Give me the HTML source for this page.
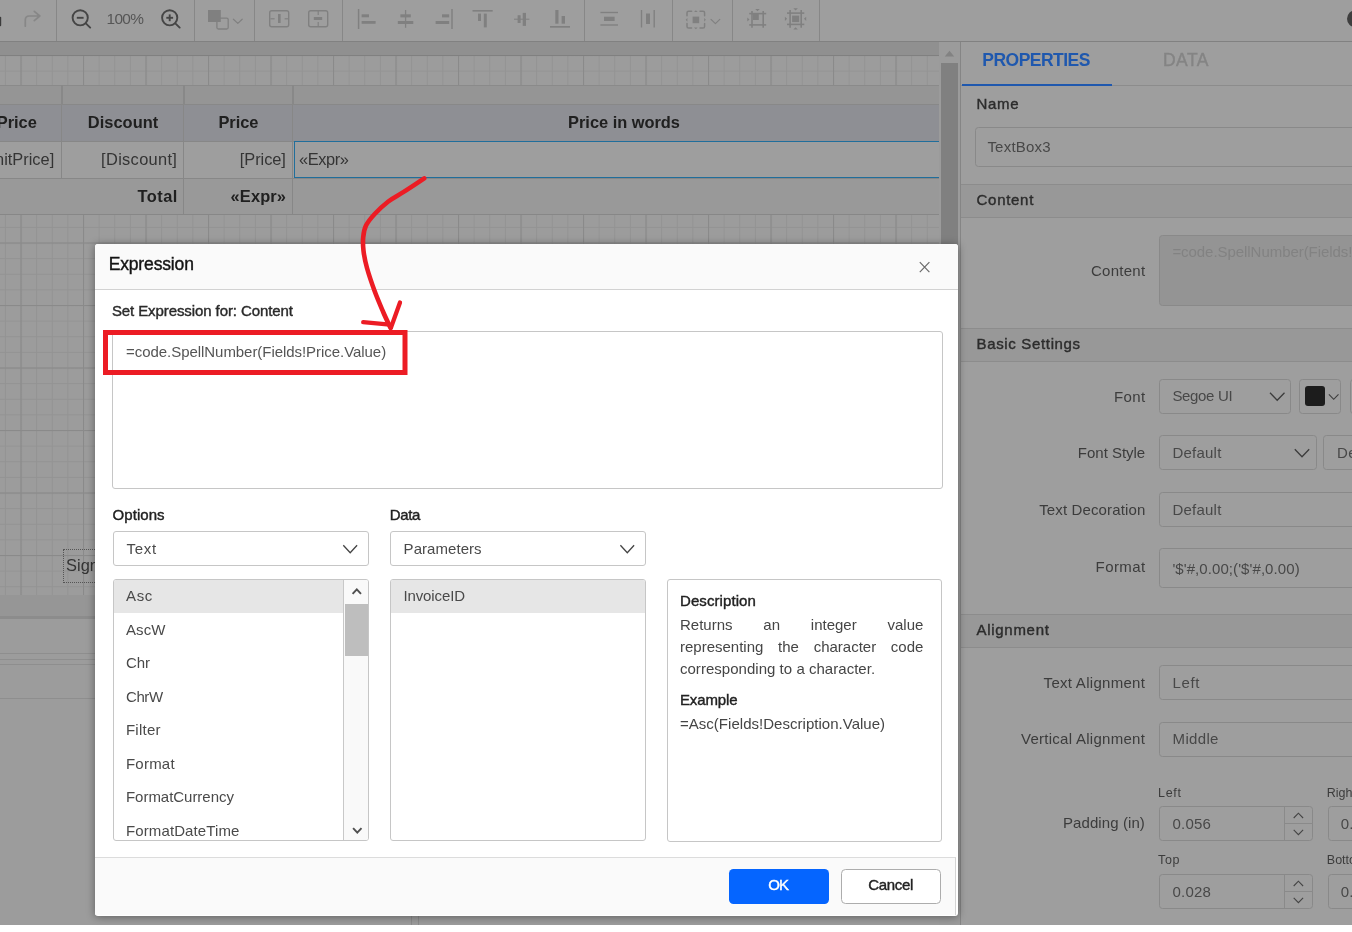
<!DOCTYPE html>
<html lang="en">
<head>
<meta charset="utf-8">
<title>Expression</title>
<style>
html,body{margin:0;padding:0;background:#fff;}
body{width:1352px;height:932px;overflow:hidden;position:relative;font-family:"Liberation Sans",sans-serif;}
#app{will-change:transform;position:absolute;left:0;top:0;width:1352px;height:925px;background:#9c9c9c;overflow:hidden;}
.a{position:absolute;box-sizing:border-box;}
.t{position:absolute;white-space:pre;line-height:1;}
svg{position:absolute;overflow:visible;}
/* toolbar */
#toolbar{position:absolute;left:0;top:0;width:1352px;height:42px;background:#9e9e9e;border-bottom:1px solid #818181;box-sizing:border-box;}
.sep{position:absolute;top:0;width:1px;height:41px;background:#878787;}
/* design */
#design{position:absolute;left:0;top:0;width:1352px;height:925px;background:#909090;overflow:hidden;}
.grid{position:absolute;left:0;width:939px;background-color:#9c9c9c;
 background-image:
  linear-gradient(to right,#8a8a8a 0,#8a8a8a 1.4px,transparent 1.5px),
  linear-gradient(to bottom,#8a8a8a 0,#8a8a8a 1.4px,transparent 1.5px),
  linear-gradient(to right,#939393 0,#939393 1px,transparent 1px),
  linear-gradient(to bottom,#939393 0,#939393 1px,transparent 1px);
 background-size:62.5px 62.5px,62.5px 62.5px,15.625px 15.625px,15.625px 15.625px;}
.cell{position:absolute;box-sizing:border-box;border-right:1px solid #878787;border-bottom:1px solid #878787;}
/* props */
#props{position:absolute;left:960px;top:42px;width:392px;height:883px;background:#9e9e9e;border-left:1px solid #858585;box-sizing:border-box;overflow:hidden;}
.sech{position:absolute;left:961px;width:391px;background:#989898;border-top:1px solid #8c8c8c;border-bottom:1px solid #8c8c8c;box-sizing:border-box;}
.inp{position:absolute;box-sizing:border-box;border:1px solid #898989;border-radius:3.5px;background:#9e9e9e;}
/* dialog */
#dialog{position:absolute;left:95px;top:244px;width:863px;height:672px;background:#fff;box-shadow:0 1px 8px 0 rgba(0,0,0,.40);border-radius:3px;overflow:hidden;}
.dbox{position:absolute;box-sizing:border-box;border:1px solid #c6c6c6;border-radius:3px;background:#fff;}
</style>
</head>
<body>
<div id="app">
<div id="design">
<div class="grid" style="top:55px;height:30px;background-position:20.5px 0px,20.5px 0px,20.5px 0px,20.5px 0px;"></div>
<div class="a" style="left:0;top:55px;width:939px;height:1px;background:#808080;"></div>
<div class="a" style="left:0;top:85px;width:939px;height:19px;background:#959595;border-top:1px solid #8a8a8a;"></div>
<div class="a" style="left:61px;top:85px;width:1.5px;height:19px;background:#888;"></div>
<div class="a" style="left:183px;top:85px;width:1.5px;height:19px;background:#888;"></div>
<div class="a" style="left:292px;top:85px;width:1.5px;height:19px;background:#888;"></div>
<div class="cell" style="left:-60px;top:104px;width:122px;height:38px;background:#8e8f94;"></div>
<div class="cell" style="left:62px;top:104px;width:121.5px;height:38px;background:#8e8f94;"></div>
<div class="cell" style="left:183.5px;top:104px;width:109.5px;height:38px;background:#8e8f94;"></div>
<div class="cell" style="left:293px;top:104px;width:662px;height:38px;background:#8e8f94;"></div>
<div class="cell" style="left:-60px;top:142px;width:122px;height:37px;background:#9e9e9e;"></div>
<div class="cell" style="left:62px;top:142px;width:121.5px;height:37px;background:#9e9e9e;"></div>
<div class="cell" style="left:183.5px;top:142px;width:109.5px;height:37px;background:#9e9e9e;"></div>
<div class="cell" style="left:293px;top:142px;width:662px;height:37px;background:#9e9e9e;"></div>
<div class="cell" style="left:-60px;top:179px;width:243.5px;height:36px;background:#999999;"></div>
<div class="cell" style="left:183.5px;top:179px;width:109.5px;height:36px;background:#999999;"></div>
<div class="cell" style="left:293px;top:179px;width:662px;height:36px;background:#999999;"></div>
<div class="a" style="left:0;top:104px;width:939px;height:1px;background:#888;"></div>
<div class="a" style="left:293.5px;top:141px;width:661px;height:37px;border:1px solid #206e9b;"></div>
<div class="grid" style="top:215px;height:379.5px;background-position:20.5px -160px,20.5px -160px,20.5px -160px,20.5px -160px;"></div>
<div class="a" style="left:63px;top:549px;width:120px;height:34px;border:1px dotted #555;"></div>
<div class="a" style="left:0;top:594.5px;width:939px;height:22px;background:#969696;"></div>
<div class="a" style="left:0;top:616px;width:939px;height:3px;background:#8c8c8c;"></div>
<div class="a" style="left:0;top:619px;width:939px;height:306px;background:#9c9c9c;"></div>
<div class="a" style="left:0;top:653px;width:939px;height:1px;background:#8e8e8e;"></div>
<div class="a" style="left:0;top:659px;width:939px;height:1px;background:#8e8e8e;"></div>
<div class="a" style="left:0;top:664px;width:939px;height:1px;background:#8e8e8e;"></div>
<div class="a" style="left:0;top:698px;width:939px;height:1px;background:#8e8e8e;"></div>
<div class="a" style="left:411px;top:700px;width:1px;height:225px;background:#8c8c8c;"></div>
<div class="a" style="left:418px;top:700px;width:1px;height:225px;background:#8c8c8c;"></div>
<div class="t" style="top:114.00px;font-size:16.4px;color:#202020;font-weight:bold;right:1315.15px;">Unit Price</div>
<div class="t" style="top:114.00px;font-size:16.4px;color:#202020;font-weight:bold;letter-spacing:0.040px;left:87.80px;">Discount</div>
<div class="t" style="top:114.00px;font-size:16.4px;color:#202020;font-weight:bold;letter-spacing:-0.076px;left:218.50px;">Price</div>
<div class="t" style="top:114.00px;font-size:16.4px;color:#202020;font-weight:bold;letter-spacing:-0.019px;left:568.10px;">Price in words</div>
<div class="t" style="top:151.00px;font-size:16.4px;color:#343434;right:1297.75px;">[UnitPrice]</div>
<div class="t" style="top:151.00px;font-size:16.4px;color:#343434;letter-spacing:0.324px;left:101.10px;">[Discount]</div>
<div class="t" style="top:151.00px;font-size:16.4px;color:#343434;letter-spacing:-0.058px;left:239.80px;">[Price]</div>
<div class="t" style="top:151.00px;font-size:16.4px;color:#343434;letter-spacing:-0.427px;left:299.10px;">«Expr»</div>
<div class="t" style="top:188.00px;font-size:16.4px;color:#202020;font-weight:bold;letter-spacing:0.467px;left:137.50px;">Total</div>
<div class="t" style="top:188.00px;font-size:16.4px;color:#202020;font-weight:bold;letter-spacing:0.126px;left:230.60px;">«Expr»</div>
<div class="t" style="top:557.00px;font-size:16.4px;color:#343434;left:66.10px;">Signature</div>
</div>
<div id="toolbar">
<div class="sep" style="left:56px"></div>
<div class="sep" style="left:194px"></div>
<div class="sep" style="left:254px"></div>
<div class="sep" style="left:342px"></div>
<div class="sep" style="left:584px"></div>
<div class="sep" style="left:672px"></div>
<div class="sep" style="left:732px"></div>
<div class="sep" style="left:819px"></div>
<svg width="1352" height="41" style="left:0;top:0"><rect x="-2.00" y="16.80" width="3.20" height="9.40" fill="#3c3c3c" rx="1"/><path d="M25.3 26.2 V20 Q25.3 16 29.3 16 H39.4 M34.3 11.3 L39.8 16 L34.3 20.7" stroke="#878787" stroke-width="1.70" fill="none" stroke-linecap="round" stroke-linejoin="round" /><circle cx="80.2" cy="17.8" r="7.6" fill="none" stroke="#454545" stroke-width="1.9"/><line x1="85.80" y1="23.40" x2="90.20" y2="27.60" stroke="#454545" stroke-width="1.90" stroke-linecap="round"/><line x1="76.80" y1="17.80" x2="83.60" y2="17.80" stroke="#454545" stroke-width="1.90" stroke-linecap="butt"/><circle cx="169.7" cy="17.8" r="7.6" fill="none" stroke="#454545" stroke-width="1.9"/><line x1="175.30" y1="23.40" x2="179.70" y2="27.60" stroke="#454545" stroke-width="1.90" stroke-linecap="round"/><line x1="166.30" y1="17.80" x2="173.10" y2="17.80" stroke="#454545" stroke-width="1.90" stroke-linecap="butt"/><line x1="169.70" y1="14.40" x2="169.70" y2="21.20" stroke="#454545" stroke-width="1.90" stroke-linecap="butt"/><rect x="216.9" y="18.1" width="11.3" height="10.9" rx="1.5" fill="none" stroke="#808080" stroke-width="1.3"/><rect x="208.00" y="10.00" width="12.80" height="12.00" fill="#808080" /><path d="M233.4 19.2 L237.8 23.4 L242.2 19.2" stroke="#808080" stroke-width="1.20" fill="none" stroke-linecap="round" stroke-linejoin="round" /><rect x="269.7" y="10.7" width="19" height="16" rx="2" fill="none" stroke="#808080" stroke-width="1.4"/><rect x="278.00" y="14.00" width="2.60" height="9.00" fill="#808080" /><line x1="270.50" y1="18.80" x2="274.60" y2="18.80" stroke="#808080" stroke-width="1.20" stroke-linecap="butt"/><line x1="284.60" y1="18.80" x2="288.80" y2="18.80" stroke="#808080" stroke-width="1.20" stroke-linecap="butt"/><rect x="308.7" y="10.7" width="19" height="16" rx="2" fill="none" stroke="#808080" stroke-width="1.4"/><rect x="313.80" y="17.00" width="8.40" height="3.00" fill="#808080" /><line x1="318.20" y1="11.00" x2="318.20" y2="15.00" stroke="#808080" stroke-width="1.20" stroke-linecap="butt"/><line x1="318.20" y1="22.00" x2="318.20" y2="26.50" stroke="#808080" stroke-width="1.20" stroke-linecap="butt"/><line x1="358.60" y1="9.00" x2="358.60" y2="29.00" stroke="#808080" stroke-width="1.50" stroke-linecap="butt"/><rect x="361.60" y="14.30" width="7.40" height="3.00" fill="#808080" /><rect x="361.60" y="21.00" width="14.00" height="2.80" fill="#808080" /><line x1="405.60" y1="10.00" x2="405.60" y2="27.80" stroke="#808080" stroke-width="1.30" stroke-linecap="butt"/><rect x="400.40" y="14.30" width="10.40" height="3.10" fill="#808080" /><rect x="397.80" y="21.00" width="15.50" height="3.00" fill="#808080" /><line x1="452.00" y1="9.00" x2="452.00" y2="29.00" stroke="#808080" stroke-width="1.50" stroke-linecap="butt"/><rect x="442.00" y="14.30" width="7.20" height="3.10" fill="#808080" /><rect x="435.60" y="21.00" width="13.60" height="3.00" fill="#808080" /><rect x="472.50" y="10.00" width="20.20" height="1.60" fill="#808080" /><rect x="478.00" y="13.60" width="3.00" height="7.40" fill="#808080" /><rect x="483.80" y="13.60" width="3.00" height="13.80" fill="#808080" /><line x1="514.00" y1="19.20" x2="529.40" y2="19.20" stroke="#808080" stroke-width="1.10" stroke-linecap="butt"/><rect x="517.60" y="15.20" width="3.00" height="7.80" fill="#808080" /><rect x="522.70" y="12.90" width="3.30" height="13.00" fill="#808080" /><rect x="550.00" y="26.00" width="20.00" height="1.70" fill="#808080" /><rect x="555.30" y="10.00" width="3.20" height="13.70" fill="#808080" /><rect x="561.60" y="16.00" width="3.40" height="7.70" fill="#808080" /><line x1="600.40" y1="12.50" x2="618.00" y2="12.50" stroke="#808080" stroke-width="1.40" stroke-linecap="butt"/><line x1="600.40" y1="25.00" x2="618.00" y2="25.00" stroke="#808080" stroke-width="1.40" stroke-linecap="butt"/><rect x="604.00" y="16.70" width="10.60" height="4.30" fill="#808080" /><line x1="641.50" y1="10.00" x2="641.50" y2="27.50" stroke="#808080" stroke-width="1.40" stroke-linecap="butt"/><line x1="654.20" y1="10.00" x2="654.20" y2="27.50" stroke="#808080" stroke-width="1.40" stroke-linecap="butt"/><rect x="646.00" y="13.50" width="4.00" height="10.50" fill="#808080" /><path d="M687.00 15.80 V12.80 Q687.00 11.20 688.60 11.20 H691.60" stroke="#808080" stroke-width="1.50" fill="none" stroke-linecap="round" stroke-linejoin="round" /><path d="M704.60 15.80 V12.80 Q704.60 11.20 703.00 11.20 H700.00" stroke="#808080" stroke-width="1.50" fill="none" stroke-linecap="round" stroke-linejoin="round" /><path d="M687.00 23.50 V26.50 Q687.00 28.10 688.60 28.10 H691.60" stroke="#808080" stroke-width="1.50" fill="none" stroke-linecap="round" stroke-linejoin="round" /><path d="M704.60 23.50 V26.50 Q704.60 28.10 703.00 28.10 H700.00" stroke="#808080" stroke-width="1.50" fill="none" stroke-linecap="round" stroke-linejoin="round" /><rect x="692.60" y="16.60" width="6.60" height="6.60" fill="#808080" /><path d="M694 11.9 l1.85 -1.7 l1.85 1.7z M694 27.5 l1.85 1.7 l1.85 -1.7z M687.4 18 l-1.7 1.85 l1.7 1.85z M704.2 18 l1.7 1.85 l-1.7 1.85z" fill="#808080"/><path d="M711 19.4 L715.4 23.6 L719.8 19.4" stroke="#808080" stroke-width="1.20" fill="none" stroke-linecap="round" stroke-linejoin="round" /><line x1="752.00" y1="11.00" x2="752.00" y2="27.80" stroke="#808080" stroke-width="1.60" stroke-linecap="butt"/><line x1="763.20" y1="11.00" x2="763.20" y2="27.80" stroke="#808080" stroke-width="1.60" stroke-linecap="butt"/><line x1="749.20" y1="13.60" x2="766.20" y2="13.60" stroke="#808080" stroke-width="1.60" stroke-linecap="butt"/><line x1="749.20" y1="24.90" x2="766.20" y2="24.90" stroke="#808080" stroke-width="1.60" stroke-linecap="butt"/><rect x="752.80" y="14.00" width="6.00" height="6.00" fill="#808080" /><path d="M755.2 9 h4.6 l-2.3 2.3z M747.3 17.4 l2.2 2.1 l-2.2 2.1z" fill="#808080"/><line x1="790.10" y1="10.00" x2="790.10" y2="27.80" stroke="#808080" stroke-width="1.60" stroke-linecap="butt"/><line x1="801.20" y1="10.00" x2="801.20" y2="27.80" stroke="#808080" stroke-width="1.60" stroke-linecap="butt"/><line x1="787.00" y1="13.10" x2="804.30" y2="13.10" stroke="#808080" stroke-width="1.60" stroke-linecap="butt"/><line x1="787.00" y1="24.40" x2="804.30" y2="24.40" stroke="#808080" stroke-width="1.60" stroke-linecap="butt"/><rect x="792.10" y="15.60" width="7.10" height="6.50" fill="#808080" /><path d="M793.3 8.3 h4.6 l-2.3 2.2z M793.3 29.4 h4.6 l-2.3 -2.2z M784.9 16.7 l2.2 2.1 l-2.2 2.1z M806.2 16.7 l-2.2 2.1 l2.2 2.1z" fill="#808080"/><circle cx="1355.4" cy="18.7" r="8.4" fill="#3e3e3e"/></svg>
<div class="t" style="top:11.00px;font-size:15.4px;color:#565656;letter-spacing:-0.700px;left:106.55px;">100%</div>
</div>
<div class="a" style="left:939px;top:42px;width:21px;height:883px;background:#9b9b9b;"></div>
<div class="a" style="left:941px;top:63px;width:17px;height:560px;background:#808080;"></div>
<svg width="21" height="20" style="left:939px;top:42px"><path d="M5.8 14.4 L10.5 8.8 L15.2 14.4z" fill="#828282"/></svg>
<div id="props"></div>
<div class="a" style="left:961px;top:85px;width:391px;height:1px;background:#8c8c8c;"></div>
<div class="a" style="left:962px;top:83.6px;width:149.6px;height:2.6px;background:#1f58ae;"></div>
<div class="t" style="top:52.00px;font-size:17.5px;color:#1f58ae;font-weight:bold;letter-spacing:-0.532px;left:982.34px;">PROPERTIES</div>
<div class="t" style="top:52.00px;font-size:17.5px;color:#848484;-webkit-text-stroke:0.4px #848484;letter-spacing:0.449px;left:1163.04px;">DATA</div>
<div class="t" style="top:96.00px;font-size:15px;color:#2c2c2c;-webkit-text-stroke:0.4px #2c2c2c;letter-spacing:0.700px;left:976.47px;">Name</div>
<div class="inp" style="left:974.5px;top:127px;width:400px;height:40px;"></div>
<div class="t" style="top:139.00px;font-size:15px;color:#484848;letter-spacing:0.221px;left:987.38px;">TextBox3</div>
<div class="sech" style="top:184px;height:34px;"></div>
<div class="t" style="top:192.00px;font-size:15px;color:#2c2c2c;-webkit-text-stroke:0.4px #2c2c2c;letter-spacing:0.700px;left:976.57px;">Content</div>
<div class="sech" style="top:328px;height:34px;"></div>
<div class="t" style="top:336.00px;font-size:15px;color:#2c2c2c;-webkit-text-stroke:0.4px #2c2c2c;letter-spacing:0.654px;left:976.57px;">Basic Settings</div>
<div class="sech" style="top:614px;height:34px;"></div>
<div class="t" style="top:622.00px;font-size:15px;color:#2c2c2c;-webkit-text-stroke:0.4px #2c2c2c;letter-spacing:0.700px;left:976.57px;">Alignment</div>
<div class="t" style="top:263.00px;font-size:15px;color:#3c3c3c;letter-spacing:0.267px;right:206.61px;">Content</div>
<div class="inp" style="left:1159px;top:235px;width:220px;height:71px;background:#949494;"></div>
<div class="t" style="top:244.00px;font-size:15px;color:#828282;letter-spacing:-0.052px;left:1172.38px;">=code.SpellNumber(Fields!Price.Value)</div>
<div class="t" style="top:389.00px;font-size:15px;color:#3c3c3c;letter-spacing:0.445px;right:206.33px;">Font</div>
<div class="inp" style="left:1159px;top:379px;width:132px;height:35px;"></div>
<div class="t" style="top:388.00px;font-size:15px;color:#484848;letter-spacing:-0.328px;left:1172.38px;">Segoe UI</div>
<svg width="1352" height="925" style="left:0;top:0"><path d="M1270.0 392.8 L1277.2 400.2 L1284.5 392.8" fill="none" stroke="#3c3c3c" stroke-width="1.3"/></svg>
<div class="inp" style="left:1298.8px;top:379px;width:42.7px;height:35px;"></div>
<div class="a" style="left:1305px;top:386px;width:20px;height:19.5px;background:#1c1c1c;border-radius:3px;"></div>
<svg width="1352" height="925" style="left:0;top:0"><path d="M1328.9 394.3 L1333.7 399.3 L1338.5 394.3" fill="none" stroke="#3c3c3c" stroke-width="1.1"/></svg>
<div class="inp" style="left:1349.5px;top:379px;width:42.7px;height:35px;"></div>
<div class="t" style="top:445.00px;font-size:15px;color:#3c3c3c;letter-spacing:-0.020px;right:206.80px;">Font Style</div>
<div class="inp" style="left:1159px;top:435px;width:158.3px;height:35px;"></div>
<div class="t" style="top:445.00px;font-size:15px;color:#484848;letter-spacing:0.236px;left:1172.38px;">Default</div>
<svg width="1352" height="925" style="left:0;top:0"><path d="M1294.8 449.2 L1302.0 456.8 L1309.2 449.2" fill="none" stroke="#3c3c3c" stroke-width="1.3"/></svg>
<div class="inp" style="left:1322.6px;top:435px;width:157.3px;height:35px;"></div>
<div class="t" style="top:445.00px;font-size:15px;color:#484848;letter-spacing:0.236px;left:1337.08px;">Default</div>
<div class="t" style="top:502.00px;font-size:15px;color:#3c3c3c;letter-spacing:0.131px;right:206.64px;">Text Decoration</div>
<div class="inp" style="left:1159px;top:492px;width:230px;height:35px;"></div>
<div class="t" style="top:502.00px;font-size:15px;color:#484848;letter-spacing:0.236px;left:1172.38px;">Default</div>
<div class="t" style="top:559.00px;font-size:15px;color:#3c3c3c;letter-spacing:0.427px;right:206.35px;">Format</div>
<div class="inp" style="left:1159px;top:548px;width:230px;height:40px;"></div>
<div class="t" style="top:561.00px;font-size:15px;color:#484848;letter-spacing:0.077px;left:1172.38px;">'$'#,0.00;('$'#,0.00)</div>
<div class="t" style="top:675.00px;font-size:15px;color:#3c3c3c;letter-spacing:0.284px;right:206.89px;">Text Alignment</div>
<div class="inp" style="left:1159px;top:665px;width:230px;height:35px;"></div>
<div class="t" style="top:675.00px;font-size:15px;color:#484848;letter-spacing:0.573px;left:1172.58px;">Left</div>
<div class="t" style="top:731.00px;font-size:15px;color:#3c3c3c;letter-spacing:0.272px;right:206.90px;">Vertical Alignment</div>
<div class="inp" style="left:1159px;top:722px;width:230px;height:35px;"></div>
<div class="t" style="top:731.00px;font-size:15px;color:#484848;letter-spacing:0.333px;left:1172.58px;">Middle</div>
<div class="t" style="top:815.00px;font-size:15px;color:#3c3c3c;letter-spacing:0.087px;right:207.09px;">Padding (in)</div>
<div class="t" style="top:787.00px;font-size:12.5px;color:#3c3c3c;letter-spacing:0.700px;left:1158.01px;">Left</div>
<div class="t" style="top:787.00px;font-size:12.5px;color:#3c3c3c;left:1326.81px;">Right</div>
<div class="inp" style="left:1159px;top:806.0px;width:154.1px;height:35px;"></div>
<div class="a" style="left:1283.7px;top:807.0px;width:1px;height:33px;background:#8a8a8a;"></div>
<div class="a" style="left:1284.2px;top:823.0px;width:28.6px;height:1px;background:#8a8a8a;"></div>
<svg width="1352" height="925" style="left:0;top:0"><path d="M1293.7 818.0 L1298.4 813.2 L1303.1 818.0" fill="none" stroke="#444" stroke-width="1.1"/></svg>
<svg width="1352" height="925" style="left:0;top:0"><path d="M1293.7 829.8 L1298.4 834.6 L1303.1 829.8" fill="none" stroke="#444" stroke-width="1.1"/></svg>
<div class="t" style="top:816.00px;font-size:15px;color:#484848;letter-spacing:0.176px;left:1172.58px;">0.056</div>
<div class="inp" style="left:1327.5px;top:806.0px;width:154.1px;height:35px;"></div>
<div class="t" style="top:816.00px;font-size:15px;color:#484848;letter-spacing:0.176px;left:1340.77px;">0.056</div>
<div class="t" style="top:854.00px;font-size:12.5px;color:#3c3c3c;letter-spacing:0.700px;left:1158.01px;">Top</div>
<div class="t" style="top:854.00px;font-size:12.5px;color:#3c3c3c;left:1326.81px;">Bottom</div>
<div class="inp" style="left:1159px;top:874.0px;width:154.1px;height:35px;"></div>
<div class="a" style="left:1283.7px;top:875.0px;width:1px;height:33px;background:#8a8a8a;"></div>
<div class="a" style="left:1284.2px;top:891.0px;width:28.6px;height:1px;background:#8a8a8a;"></div>
<svg width="1352" height="925" style="left:0;top:0"><path d="M1293.7 886.0 L1298.4 881.2 L1303.1 886.0" fill="none" stroke="#444" stroke-width="1.1"/></svg>
<svg width="1352" height="925" style="left:0;top:0"><path d="M1293.7 897.8 L1298.4 902.6 L1303.1 897.8" fill="none" stroke="#444" stroke-width="1.1"/></svg>
<div class="t" style="top:884.00px;font-size:15px;color:#484848;letter-spacing:0.176px;left:1172.58px;">0.028</div>
<div class="inp" style="left:1327.5px;top:874.0px;width:154.1px;height:35px;"></div>
<div class="t" style="top:884.00px;font-size:15px;color:#484848;letter-spacing:0.176px;left:1340.77px;">0.028</div>
<div id="dialog"><div class="a" style="left:0;top:0;width:863px;height:46px;background:#fafafa;border-bottom:1px solid #d2d2d2;"></div><div class="a" style="left:0;top:613px;width:861px;height:58px;background:#fafafa;border-top:1px solid #dcdcdc;border-right:1px solid #d4d4d4;"></div></div>
<div class="t" style="top:256.00px;font-size:17.5px;color:#141414;-webkit-text-stroke:0.4px #141414;letter-spacing:-0.139px;left:108.64px;">Expression</div>
<svg width="1352" height="925" style="left:0;top:0"><path d="M919.8 262.2 L929.4 272.2 M929.4 262.2 L919.8 272.2" stroke="#6a6a6a" stroke-width="1.2" fill="none"/></svg>
<div class="t" style="top:303.00px;font-size:15px;color:#2a2a2a;-webkit-text-stroke:0.4px #2a2a2a;letter-spacing:-0.088px;left:111.88px;">Set Expression for: Content</div>
<div class="dbox" style="left:112px;top:331px;width:831.2px;height:158px;"></div>
<div class="t" style="top:344.00px;font-size:15px;color:#555;letter-spacing:-0.052px;left:126.08px;">=code.SpellNumber(Fields!Price.Value)</div>
<div class="t" style="top:507.00px;font-size:15px;color:#222;-webkit-text-stroke:0.4px #222;letter-spacing:0.041px;left:112.58px;">Options</div>
<div class="t" style="top:507.00px;font-size:15px;color:#222;-webkit-text-stroke:0.4px #222;letter-spacing:-0.346px;left:389.78px;">Data</div>
<div class="dbox" style="left:113.4px;top:531px;width:255.2px;height:35px;"></div>
<div class="t" style="top:541.00px;font-size:15px;color:#4a4a4a;letter-spacing:0.700px;left:126.58px;">Text</div>
<svg width="1352" height="925" style="left:0;top:0"><path d="M343.3 545.2 L350.2 552.8 L357.1 545.2" fill="none" stroke="#444" stroke-width="1.3"/></svg>
<div class="dbox" style="left:390.2px;top:531px;width:255.4px;height:35px;"></div>
<div class="t" style="top:541.00px;font-size:15px;color:#4a4a4a;letter-spacing:0.058px;left:403.57px;">Parameters</div>
<svg width="1352" height="925" style="left:0;top:0"><path d="M620.4 545.2 L627.3 552.8 L634.1 545.2" fill="none" stroke="#444" stroke-width="1.3"/></svg>
<div class="dbox" style="left:113.4px;top:579px;width:255.2px;height:262px;overflow:hidden;"><div class="a" style="left:0;top:0;width:229px;height:33px;background:#e6e6e6;"></div><div class="a" style="left:229px;top:0;width:25.2px;height:260px;background:#f9f9f9;border-left:1px solid #c8c8c8;"></div><div class="a" style="left:231px;top:23.6px;width:23.2px;height:52.6px;background:#bebebe;"></div></div>
<svg width="1352" height="925" style="left:0;top:0"><path d="M352.6 593.9 L356.8 589.3 L361.0 593.9" fill="none" stroke="#505050" stroke-width="1.9"/></svg>
<svg width="1352" height="925" style="left:0;top:0"><path d="M353.1 828.1 L357.3 832.7 L361.5 828.1" fill="none" stroke="#505050" stroke-width="1.9"/></svg>
<div class="t" style="top:588.00px;font-size:15px;color:#4a4a4a;letter-spacing:0.700px;left:125.97px;">Asc</div>
<div class="t" style="top:622.00px;font-size:15px;color:#4a4a4a;letter-spacing:0.093px;left:125.97px;">AscW</div>
<div class="t" style="top:655.00px;font-size:15px;color:#4a4a4a;letter-spacing:-0.011px;left:125.97px;">Chr</div>
<div class="t" style="top:689.00px;font-size:15px;color:#4a4a4a;letter-spacing:-0.393px;left:125.97px;">ChrW</div>
<div class="t" style="top:722.00px;font-size:15px;color:#4a4a4a;letter-spacing:0.241px;left:125.97px;">Filter</div>
<div class="t" style="top:756.00px;font-size:15px;color:#4a4a4a;letter-spacing:0.227px;left:125.97px;">Format</div>
<div class="t" style="top:789.00px;font-size:15px;color:#4a4a4a;letter-spacing:-0.031px;left:125.97px;">FormatCurrency</div>
<div class="t" style="top:823.00px;font-size:15px;color:#4a4a4a;letter-spacing:0.114px;left:125.97px;">FormatDateTime</div>
<div class="dbox" style="left:390.2px;top:579px;width:255.4px;height:262px;overflow:hidden;"><div class="a" style="left:0;top:0;width:254px;height:33px;background:#e6e6e6;"></div></div>
<div class="t" style="top:588.00px;font-size:15px;color:#4a4a4a;letter-spacing:-0.110px;left:403.38px;">InvoiceID</div>
<div class="dbox" style="left:667.3px;top:579px;width:274.3px;height:263px;"></div>
<div class="t" style="top:593.00px;font-size:15px;color:#222;-webkit-text-stroke:0.4px #222;letter-spacing:0.082px;left:679.97px;">Description</div>
<div class="t" style="left:680px;top:616.67px;width:243.4px;font-size:15px;color:#454545;white-space:normal;text-align:justify;text-align-last:justify;">Returns an integer value</div>
<div class="t" style="left:680px;top:638.67px;width:243.4px;font-size:15px;color:#454545;white-space:normal;text-align:justify;text-align-last:justify;">representing the character code</div>
<div class="t" style="top:661.00px;font-size:15px;color:#454545;letter-spacing:0.030px;left:679.97px;">corresponding to a character.</div>
<div class="t" style="top:692.00px;font-size:15px;color:#222;-webkit-text-stroke:0.4px #222;letter-spacing:-0.118px;left:679.97px;">Example</div>
<div class="t" style="top:716.00px;font-size:15px;color:#454545;letter-spacing:0.026px;left:679.97px;">=Asc(Fields!Description.Value)</div>
<div class="a" style="left:728.8px;top:868.9px;width:100.1px;height:35px;background:#0565ff;border-radius:4.5px;"></div>
<div class="t" style="top:877.00px;font-size:15px;color:#fff;-webkit-text-stroke:0.4px #fff;letter-spacing:-0.700px;left:768.17px;">OK</div>
<div class="a" style="left:841.2px;top:868.9px;width:99.5px;height:35px;background:#fff;border:1px solid #adadad;border-radius:4.5px;"></div>
<div class="t" style="top:877.00px;font-size:15px;color:#222;-webkit-text-stroke:0.4px #222;letter-spacing:-0.291px;left:868.17px;">Cancel</div>
<svg width="1352" height="925" style="left:0;top:0"><rect x="105.5" y="332.5" width="299.5" height="40" fill="none" stroke="#ec1c24" stroke-width="5"/><path d="M424.2 178.4 C420.8 180.7 409.7 188.1 403.7 191.9 C397.7 195.8 393.1 197.8 388.3 201.5 C383.5 205.2 378.4 210.0 374.7 214.0 C371.0 218.0 367.9 221.7 366.0 225.6 C364.1 229.5 363.6 233.0 363.2 237.2 C362.8 241.4 362.9 245.6 363.5 250.7 C364.1 255.8 365.1 261.2 367.0 268.0 C368.9 274.8 372.0 283.9 374.7 291.3 C377.4 298.7 380.8 306.4 383.4 312.5 C386.0 318.6 389.4 325.4 390.6 328.0" fill="none" stroke="#ec1c24" stroke-width="4.6" stroke-linecap="round" stroke-linejoin="round"/><path d="M400 302.5 L391 327.6 M363.2 322.2 L389.8 324.6" fill="none" stroke="#ec1c24" stroke-width="4.3" stroke-linecap="round"/></svg>
</div>
</body>
</html>
